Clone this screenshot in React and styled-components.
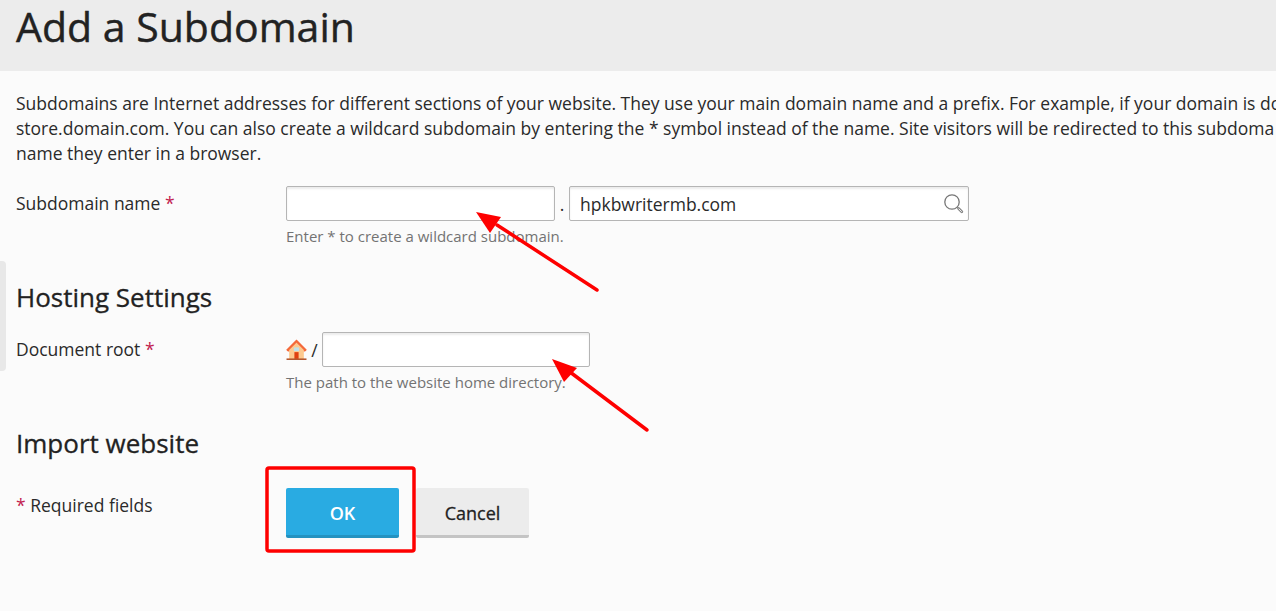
import styled, { createGlobalStyle } from 'styled-components';

const GlobalStyle = createGlobalStyle`
  html, body {
    margin: 0;
    height: 100%;
    overflow: hidden;
    background: #fbfbfb;
  }
  body {
    font-family: "Open Sans", "Noto Sans", sans-serif;
    color: #222;
  }
`;

const Page = styled.div`
  position: relative;
  width: 1276px;
  height: 611px;
  overflow: hidden;
  background: #fbfbfb;
`;

const Header = styled.header`
  height: 71px;
  padding-left: 16px;
  background: #ececec;
  box-sizing: border-box;
`;

const Title = styled.h1`
  margin: 0;
  font-size: 41px;
  font-weight: 400;
  line-height: 52px;
  color: #222;
  -webkit-text-stroke: 0.4px #222;
`;

const Content = styled.main`
  padding: 20px 0 0 16px;
`;

const Intro = styled.p`
  margin: 0 0 20px;
  font-size: 17.5px;
  line-height: 25px;
  width: 1260px;
  overflow: hidden;
  white-space: nowrap;
  color: #2a2a2a;
`;

const Row = styled.div`
  display: grid;
  grid-template-columns: 270px 1fr;
`;

const Label = styled.label`
  font-size: 17.5px;
  line-height: 35px;
  color: #2a2a2a;
`;

const Star = styled.span`
  color: #c2224f;
`;

const Controls = styled.div`
  display: flex;
  align-items: center;
  height: 35px;
`;

const Input = styled.div`
  position: relative;
  display: flex;
  align-items: center;
  box-sizing: border-box;
  width: ${(p) => p.$width}px;
  height: 35px;
  padding-left: 10px;
  padding-top: 1px;
  border: 1px solid #b5b5b5;
  border-radius: 2px;
  background: #fff;
  box-shadow: inset 0 2px 2px rgba(0, 0, 0, 0.08);
  font-size: 17.5px;
  color: #2a2a2a;
`;

const Separator = styled.span`
  width: ${(p) => p.$width}px;
  font-size: 17.5px;
  text-align: center;
  color: #2a2a2a;
`;

const SearchIcon = styled.svg`
  position: absolute;
  right: 2px;
  top: 5px;
`;

const HomeIcon = styled.svg`
  flex: none;
`;

const Hint = styled.div`
  margin-top: 5px;
  font-size: 15px;
  line-height: 20px;
  color: #737373;
`;

const SectionTitle = styled.h2`
  margin: 0;
  font-size: 26px;
  font-weight: 400;
  line-height: 32px;
  color: #222;
  -webkit-text-stroke: 0.3px #222;
`;

const HostingTitle = styled(SectionTitle)`
  margin: 35px 0 19px;
`;

const ImportTitle = styled(SectionTitle)`
  margin: 35px 0 29px;
`;

const Buttons = styled.div`
  display: flex;
  gap: 17px;
`;

const Button = styled.button`
  width: 113px;
  height: 50px;
  padding: 2px 0 0;
  border: 0;
  border-bottom: 3px solid ${(p) => (p.$primary ? '#2492c0' : '#c4c4c4')};
  border-radius: 2px;
  background: ${(p) => (p.$primary ? '#29abe2' : '#ececec')};
  color: ${(p) => (p.$primary ? '#fff' : '#222')};
  font-family: inherit;
  font-size: 18px;
  font-weight: ${(p) => (p.$primary ? 600 : 500)};
  -webkit-text-stroke: ${(p) => (p.$primary ? '0' : '0.3px #222')};
`;

const SideHandle = styled.div`
  position: absolute;
  left: 0;
  top: 261px;
  width: 6px;
  height: 110px;
  border-radius: 0 4px 4px 0;
  background: #e8e8e8;
`;

const Annotations = styled.svg`
  position: absolute;
  left: 0;
  top: 0;
  pointer-events: none;
`;

export default function App() {
  return (
    <Page>
      <GlobalStyle />
      <Header>
        <Title>Add a Subdomain</Title>
      </Header>
      <SideHandle />
      <Content>
        <Intro>
          Subdomains are Internet addresses for different sections of your website. They use your main domain name and a prefix. For example, if your domain is do
          <br />
          store.domain.com. You can also create a wildcard subdomain by entering the * symbol instead of the name. Site visitors will be redirected to this subdoma
          <br />
          name they enter in a browser.
        </Intro>

        <Row>
          <Label>
            Subdomain name <Star>*</Star>
          </Label>
          <div>
            <Controls>
              <Input $width={269} />
              <Separator $width={14}>.</Separator>
              <Input $width={400}>
                hpkbwritermb.com
                <SearchIcon width="24" height="24" viewBox="0 0 24 24" fill="none">
                  <circle cx="10" cy="10" r="7.2" stroke="#777" strokeWidth="1.3" />
                  <path d="M15.4 15.4l1.6 1.6" stroke="#777" strokeWidth="1.3" />
                  <path d="M16.6 16.6l3.2 3.2" stroke="#888" strokeWidth="2.8" strokeLinecap="round" />
                  <path d="M16.9 16.9l2.6 2.6" stroke="#eee" strokeWidth="1" strokeLinecap="round" />
                </SearchIcon>
              </Input>
            </Controls>
            <Hint>Enter * to create a wildcard subdomain.</Hint>
          </div>
        </Row>

        <HostingTitle>Hosting Settings</HostingTitle>

        <Row>
          <Label>
            Document root <Star>*</Star>
          </Label>
          <div>
            <Controls>
              <HomeIcon width="21" height="21" viewBox="0 0 20 20">
                <path d="M10 1L0.5 10.5 2 12h16l1.5-1.5z" fill="#f4693a" />
                <path d="M3 10l7-7 7 7v9H3z" fill="#fdc98f" />
                <path d="M1 11l9-9 9 9" fill="none" stroke="#f4693a" strokeWidth="2" />
                <rect x="7.5" y="8" width="5" height="3.5" fill="#bfe0ea" />
                <rect x="8" y="12.5" width="4" height="6.5" fill="#e0400f" />
                <rect x="0.5" y="18.5" width="19" height="1.5" fill="#b4572e" />
              </HomeIcon>
              <Separator $width={15}>/</Separator>
              <Input $width={268} />
            </Controls>
            <Hint>The path to the website home directory.</Hint>
          </div>
        </Row>

        <ImportTitle>Import website</ImportTitle>

        <Row>
          <Label>
            <Star>*</Star> Required fields
          </Label>
          <Buttons>
            <Button $primary>OK</Button>
            <Button>Cancel</Button>
          </Buttons>
        </Row>
      </Content>

      <Annotations width="1276" height="611" viewBox="0 0 1276 611">
        <rect x="267" y="468" width="147" height="83" rx="2" fill="none" stroke="#fe0000" strokeWidth="3.5" />
        <path d="M597 290L497 225" stroke="#fe0000" strokeWidth="3.5" strokeLinecap="round" />
        <path d="M476 212L501 217 490 233z" fill="#fe0000" />
        <path d="M647 430L570 372" stroke="#fe0000" strokeWidth="3.5" strokeLinecap="round" />
        <path d="M552 359L577 368 564 382z" fill="#fe0000" />
      </Annotations>
    </Page>
  );
}
